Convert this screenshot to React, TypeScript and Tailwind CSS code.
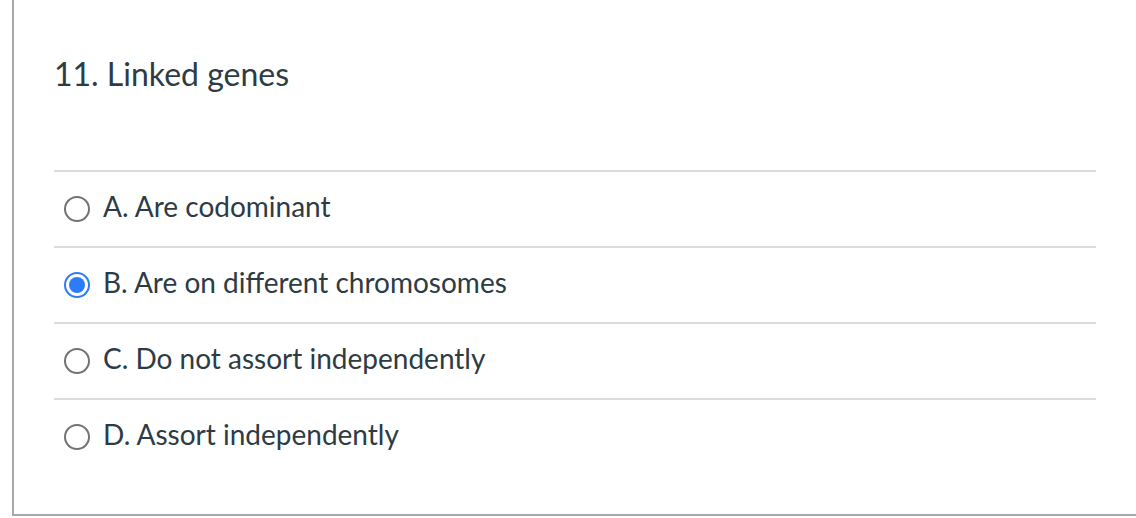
const options = [
  { id: "a", label: "A. Are codominant" },
  { id: "b", label: "B. Are on different chromosomes" },
  { id: "c", label: "C. Do not assort independently" },
  { id: "d", label: "D. Assort independently" },
];

function Radio({ checked }: { checked: boolean }) {
  if (checked) {
    return (
      <span className="flex h-[26px] w-[26px] shrink-0 items-center justify-center rounded-full border-2 border-[#2b7cf6] bg-white">
        <span className="h-[16px] w-[16px] rounded-full bg-[#2b7cf6]" />
      </span>
    );
  }
  return <span className="h-[26px] w-[26px] shrink-0 rounded-full border-2 border-[#737373] bg-white" />;
}

export default function App() {
  const selected = "b";
  return (
    <div
      className="h-[518px] w-[1136px] overflow-hidden bg-white"
      style={{ fontFamily: "Lato, 'Noto Sans', sans-serif" }}
    >
      <div className="ml-[12px] h-[516px] border-b-2 border-l-2 border-[#a8a8a8] px-[40px] text-[#2d3b45]">
        <div className="h-[170px] pt-[54px]">
          <h2 className="text-[32px] leading-[40px]">11. Linked genes</h2>
        </div>
        {options.map((o) => (
          <div key={o.id} className="flex h-[76px] items-center gap-[13px] border-t-2 border-[#dcdcdc] pl-[10px]">
            <Radio checked={o.id === selected} />
            <span className="-mt-[6px] text-[28px] leading-[34px]">{o.label}</span>
          </div>
        ))}
      </div>
    </div>
  );
}
